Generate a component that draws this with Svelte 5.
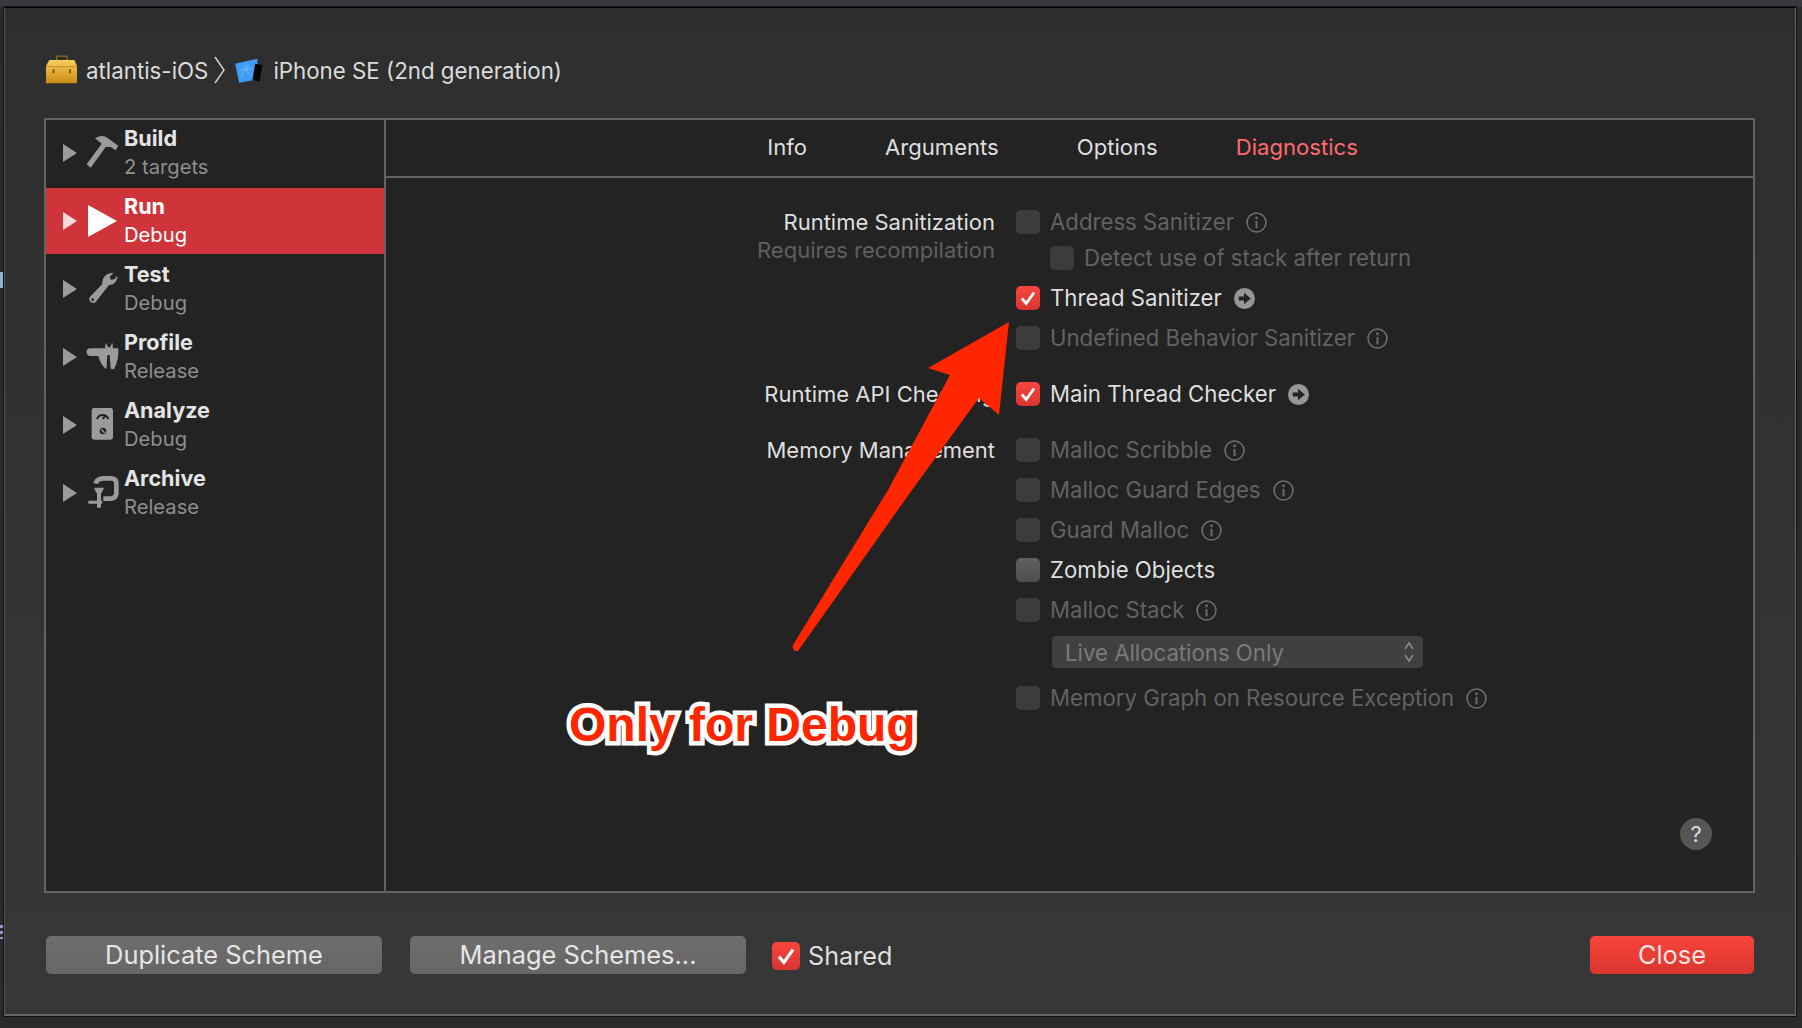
<script>
	const schemes = [
		{ name: 'Build', sub: '2 targets', icon: 'hammer' },
		{ name: 'Run', sub: 'Debug', icon: 'play', active: true },
		{ name: 'Test', sub: 'Debug', icon: 'wrench' },
		{ name: 'Profile', sub: 'Release', icon: 'caliper' },
		{ name: 'Analyze', sub: 'Debug', icon: 'meter' },
		{ name: 'Archive', sub: 'Release', icon: 'clamp' }
	];

	const tabs = ['Info', 'Arguments', 'Options', 'Diagnostics'];

	const sections = [
		{
			title: 'Runtime Sanitization',
			note: 'Requires recompilation',
			options: [
				{ label: 'Address Sanitizer', off: true, info: true, tight: true },
				{ label: 'Detect use of stack after return', off: true, nested: true },
				{ label: 'Thread Sanitizer', checked: true, go: true },
				{ label: 'Undefined Behavior Sanitizer', off: true, info: true }
			]
		},
		{
			title: 'Runtime API Checking',
			options: [{ label: 'Main Thread Checker', checked: true, go: true }]
		},
		{
			title: 'Memory Management',
			options: [
				{ label: 'Malloc Scribble', off: true, info: true },
				{ label: 'Malloc Guard Edges', off: true, info: true },
				{ label: 'Guard Malloc', off: true, info: true },
				{ label: 'Zombie Objects' },
				{ label: 'Malloc Stack', off: true, info: true, select: 'Live Allocations Only' },
				{ label: 'Memory Graph on Resource Exception', off: true, info: true }
			]
		}
	];
</script>

{#snippet check()}
	<svg class="tick" viewBox="0 0 24 24"><path d="M6 12.5l4.200 5L18 6.500" /></svg>
{/snippet}

<div class="screen">
	<span class="behind behind-t"></span>
	<span class="behind behind-lines"></span>

	<div class="window">
		<header class="crumbs">
			<svg class="toolbox" viewBox="15 15 100 90">
				<defs>
					<linearGradient id="gold" x1="0" y1="0" x2="0" y2="1">
						<stop offset="0" stop-color="#f8cf5c" />
						<stop offset="1" stop-color="#c98a14" />
					</linearGradient>
				</defs>
				<path d="M50 30v-9q0-3 3-3h26q3 0 3 3v9" fill="none" stroke="#9a6a22" stroke-width="4" />
				<path d="M28 30h76l8 18v52H18V48z" fill="url(#gold)" />
				<path d="M18 50h94" stroke="#a87412" stroke-width="2" />
				<rect x="38" y="58" width="6" height="12" fill="#7c5a1c" />
				<rect x="88" y="58" width="6" height="12" fill="#7c5a1c" />
			</svg>
			<span>atlantis-iOS</span>
			<svg class="chevron" viewBox="0 0 11 28"><path d="M1 1l9 13-9 13" /></svg>
			<svg class="device" viewBox="580 25 95 75">
				<path d="M586 42l66-15 4 62-58 10z" fill="#3f9df2" />
				<path d="M604 80l22-36M612 50l20 30M600 62l38-6" stroke="#9fd0fa" stroke-width="1.500" fill="none" />
				<path d="M646 42l22 4-9 50-21-5z" fill="#050505" />
			</svg>
			<span>iPhone SE (2nd generation)</span>
		</header>

		<main class="panel">
			<aside class="sidebar">
				{#each schemes as item}
					<div class="scheme" class:active={item.active}>
						<span class="disclosure"></span>
						{#if item.icon === 'hammer'}
							<svg class="scheme-icon" viewBox="88 33 102 102">
								<path d="M93 118l12 10 45-62 15 0 15 10 8-14-38-27q-15-5-32 5l20 16z" />
							</svg>
						{:else if item.icon === 'play'}
							<svg class="scheme-icon" viewBox="0 0 34 34"><path class="white" d="M3 1v32l29-16z" /></svg>
						{:else if item.icon === 'wrench'}
							<svg class="scheme-icon" viewBox="88 36 102 102">
								<path d="M174 38l-12 12 4 10 11-3 8-10c2 13-10 29-25 28l-40 51c-8 8-24-2-18-14l38-40c-2-17 10-34 34-34z" />
								<circle class="dark" cx="111" cy="119" r="4" />
							</svg>
						{:else if item.icon === 'caliper'}
							<svg class="scheme-icon" viewBox="88 240 102 102">
								<path d="M103 265h45l2-17 8 14h5l7-14 2 17h16q2 35-13 63l-10-2-3-41h-7l-3 43q-17-13-24-40h-25q-10-1-10-12t10-11z" />
							</svg>
						{:else if item.icon === 'meter'}
							<svg class="scheme-icon" viewBox="88 39 102 102">
								<rect x="108" y="38" width="64" height="96" rx="9" />
								<path class="dark-line" d="M124 72a18 18 0 0 1 34 0M141 72l8-10" />
								<circle class="dark" cx="142" cy="108" r="10" />
								<path class="light-line" d="M136 103l12 11" />
							</svg>
						{:else}
							<svg class="scheme-icon" viewBox="88 243 102 102">
								<path class="clamp-line" d="M120 266q2-14 22-16h23q17 0 17 14v30q0 15-17 17h-22" />
								<path d="M115 278h30l-7 16h-16zM124 294h12v44h-12zM98 317h42v9H98z" />
							</svg>
						{/if}
						<div class="scheme-text">
							<strong>{item.name}</strong>
							<span>{item.sub}</span>
						</div>
					</div>
				{/each}
			</aside>

			<section class="detail">
				<nav class="tabs">
					{#each tabs as tab}
						<span class:current={tab === 'Diagnostics'}>{tab}</span>
					{/each}
				</nav>

				<div class="form">
					{#each sections as section}
						<div class="group">
							<div class="group-label">
								<div>{section.title}</div>
								{#if section.note}<div class="note">{section.note}</div>{/if}
							</div>
							<div class="options">
								{#each section.options as opt}
									<div class="option" class:off={opt.off} class:nested={opt.nested} class:tight={opt.tight}>
										<span class="box" class:on={opt.checked} class:live={!opt.off && !opt.checked}>
											{#if opt.checked}{@render check()}{/if}
										</span>
										<span>{opt.label}</span>
										{#if opt.info}
											<svg class="glyph" viewBox="0 0 20 20">
												<circle cx="10" cy="10" r="9" fill="none" stroke="#6f6f6f" stroke-width="1.500" />
												<circle cx="10" cy="5.500" r="1.300" fill="#6f6f6f" />
												<path d="M10 8.500v7" stroke="#6f6f6f" stroke-width="1.800" />
											</svg>
										{/if}
										{#if opt.go}
											<svg class="glyph" viewBox="0 0 20 20">
												<circle cx="10" cy="10" r="10" fill="#979797" />
												<path d="M4.500 8h5V4.500L16 10l-6.500 5.500V12h-5z" fill="#232323" />
											</svg>
										{/if}
									</div>
									{#if opt.select}
										<div class="picker">
											<span>{opt.select}</span>
											<svg viewBox="0 0 12 22"><path d="M2 8l4-6 4 6M2 14l4 6 4-6" /></svg>
										</div>
									{/if}
								{/each}
							</div>
						</div>
					{/each}
				</div>

				<button class="help">?</button>
			</section>
		</main>

		<footer class="actions">
			<button class="btn">Duplicate Scheme</button>
			<button class="btn">Manage Schemes...</button>
			<label class="shared">
				<span class="box on big">{@render check()}</span>
				<span>Shared</span>
			</label>
			<button class="btn close">Close</button>
		</footer>
	</div>

	<!-- annotation drawn on top of the screenshot -->
	<svg class="arrow" viewBox="0 0 1802 1028">
		<path d="M1009 322L928 368L950 375L888 490L793 645q-1 7 5 6L912 490L979 398L999 415z" fill="#ff2600" />
	</svg>
	<div class="callout">Only for Debug</div>
</div>

<style>
	:global(body) {
		margin: 0;
		background: #2a2a2c;
	}

	.screen {
		position: relative;
		width: 1802px;
		height: 1028px;
		overflow: hidden;
		box-sizing: border-box;
		padding: 7px 6px 12px 4px;
		background: linear-gradient(#3a3a3e 0, #3a3a3e 7px, #2a2a2c 7px);
		font-family: Inter, 'Liberation Sans', sans-serif;
		font-size: 22.2px;
		color: #dfdfdf;
	}

	.behind {
		position: absolute;
		left: 0;
		width: 3px;
	}

	.behind-t {
		top: 272px;
		height: 16px;
		background: #8fb3cc;
	}

	.behind-lines {
		top: 925px;
		height: 14px;
		background: repeating-linear-gradient(#a58ccc 0 3px, transparent 3px 6px);
	}

	.window {
		position: relative;
		height: 100%;
		box-sizing: border-box;
		display: flex;
		flex-direction: column;
		padding: 0 40px 0 39px;
		border-top: 1px solid #000;
		border-left: 1px solid #555;
		border-right: 1px solid #666;
		border-bottom: 2px solid #666;
		outline: 1px solid #111;
		background: linear-gradient(#2e2e2e, #373737);
	}

	.crumbs {
		height: 110px;
		flex: none;
		display: flex;
		align-items: center;
		font-size: 22.3px;
		color: #dcdcdc;
		box-sizing: border-box;
		padding-top: 14px;
	}

	.toolbox {
		width: 33px;
		height: 30px;
		margin: 0 8px 0 1px;
	}

	.chevron {
		width: 11px;
		height: 28px;
		margin: 0 8px 0 6px;
		fill: none;
		stroke: #cfcfcf;
		stroke-width: 1.5;
	}

	.device {
		width: 32px;
		height: 25px;
		margin-right: 8px;
	}

	.panel {
		flex: 1;
		min-height: 0;
		display: flex;
		border: 2px solid #636363;
		background: #232323;
	}

	.sidebar {
		width: 340px;
		flex: none;
		box-sizing: border-box;
		display: flex;
		flex-direction: column;
		gap: 2px;
		border-right: 2px solid #636363;
	}

	.scheme {
		height: 66px;
		display: flex;
		align-items: center;
		padding-left: 17px;
		color: #e4e4e4;
	}

	.scheme.active {
		background: #d0343b;
		color: #fff;
	}

	.disclosure {
		width: 0;
		height: 0;
		border-left: 14px solid #9b9b9b;
		border-top: 9px solid transparent;
		border-bottom: 9px solid transparent;
		margin-right: 8px;
	}

	.active .disclosure {
		border-left-color: #f6dadc;
	}

	.scheme-icon {
		width: 34px;
		height: 34px;
		flex: none;
		fill: #9b9b9b;
	}

	.scheme-icon .white {
		fill: #fff;
	}

	.scheme-icon .dark {
		fill: #232323;
	}

	.dark-line {
		fill: none;
		stroke: #232323;
		stroke-width: 6;
	}

	.light-line {
		fill: none;
		stroke: #9b9b9b;
		stroke-width: 4;
	}

	.clamp-line {
		fill: none;
		stroke: #9b9b9b;
		stroke-width: 14;
	}

	.scheme-text {
		margin-left: 5px;
		display: flex;
		flex-direction: column;
	}

	.scheme-text strong {
		font-size: 21.6px;
		font-weight: 700;
		line-height: 26px;
		margin-bottom: 2px;
	}

	.scheme-text span {
		font-size: 20.2px;
		line-height: 28px;
		color: #8e8e8e;
	}

	.active .scheme-text span {
		color: #fff;
	}

	.detail {
		flex: 1;
		position: relative;
		display: flex;
		flex-direction: column;
		min-width: 0;
	}

	.tabs {
		height: 58px;
		flex: none;
		box-sizing: border-box;
		display: flex;
		align-items: center;
		justify-content: center;
		gap: 78px;
		padding: 0 14px 3px 0;
		border-bottom: 2px solid #636363;
		font-size: 22.1px;
	}

	.tabs .current {
		color: #ff6b70;
	}

	.form {
		padding-top: 32px;
		display: flex;
		flex-direction: column;
		gap: 32px;
	}

	.group {
		display: grid;
		grid-template-columns: 609px 1fr;
		column-gap: 21px;
	}

	.group-label {
		text-align: right;
		line-height: 24px;
		font-size: 22px;
	}

	.note {
		margin-top: 4px;
		color: #5f5f5f;
	}

	.options {
		display: flex;
		flex-direction: column;
		gap: 16px;
	}

	.option {
		height: 24px;
		display: flex;
		align-items: center;
		gap: 10px;
		line-height: 24px;
	}

	.option.off {
		color: #626262;
	}

	.option.tight {
		margin-bottom: -4px;
	}

	.option.nested {
		margin-left: 34px;
	}

	.glyph {
		width: 21px;
		height: 21px;
		margin-left: 2px;
	}

	.box {
		width: 24px;
		height: 24px;
		flex: none;
		box-sizing: border-box;
		border-radius: 5px;
		background: #3c3c3c;
		display: flex;
		align-items: center;
		justify-content: center;
	}

	.box.live {
		background: linear-gradient(#606060, #4e4e4e);
	}

	.box.on {
		background: linear-gradient(#f8453d, #d83530);
	}

	.box.big {
		width: 28px;
		height: 28px;
	}

	.tick {
		width: 100%;
		height: 100%;
		fill: none;
		stroke: #fff;
		stroke-width: 2.8;
	}

	.picker {
		width: 371px;
		height: 32px;
		margin: -2px 0 2px 36px;
		box-sizing: border-box;
		padding: 0 8px 0 13px;
		display: flex;
		align-items: center;
		justify-content: space-between;
		border-radius: 4px;
		background: #404040;
		color: #7a7a7a;
	}

	.picker svg {
		width: 12px;
		height: 22px;
		fill: none;
		stroke: #8a8a8a;
		stroke-width: 1.6;
	}

	.help {
		position: absolute;
		right: 41px;
		bottom: 41px;
		width: 32px;
		height: 32px;
		padding: 0;
		border: none;
		border-radius: 50%;
		background: #565656;
		color: #dcdcdc;
		font: 22px Inter, 'Liberation Sans', sans-serif;
	}

	.actions {
		height: 121px;
		flex: none;
		box-sizing: border-box;
		padding: 43px 1px 0 2px;
		display: flex;
		align-items: flex-start;
	}

	.btn {
		width: 336px;
		height: 38px;
		padding: 0 0 2px;
		border: none;
		border-radius: 5px;
		background: linear-gradient(#6e6e6e, #666);
		color: #e6e6e6;
		font: 25.4px Inter, 'Liberation Sans', sans-serif;
	}

	.btn + .btn {
		margin-left: 28px;
	}

	.shared {
		margin: 6px 0 0 26px;
		display: flex;
		align-items: center;
		gap: 8px;
		font-size: 25.2px;
		line-height: 26px;
	}

	.btn.close {
		width: 164px;
		margin-left: auto;
		background: linear-gradient(#f9443b, #d9362f);
		color: #fde3e1;
	}

	.arrow {
		position: absolute;
		left: 0;
		top: 0;
		width: 1802px;
		height: 1028px;
		pointer-events: none;
	}

	.callout {
		position: absolute;
		left: 569px;
		top: 695px;
		font-family: 'Liberation Sans', sans-serif;
		font-weight: 700;
		font-size: 48px;
		line-height: 60px;
		color: #ff2600;
		-webkit-text-stroke: 9px #fff;
		paint-order: stroke fill;
		white-space: nowrap;
	}
</style>
